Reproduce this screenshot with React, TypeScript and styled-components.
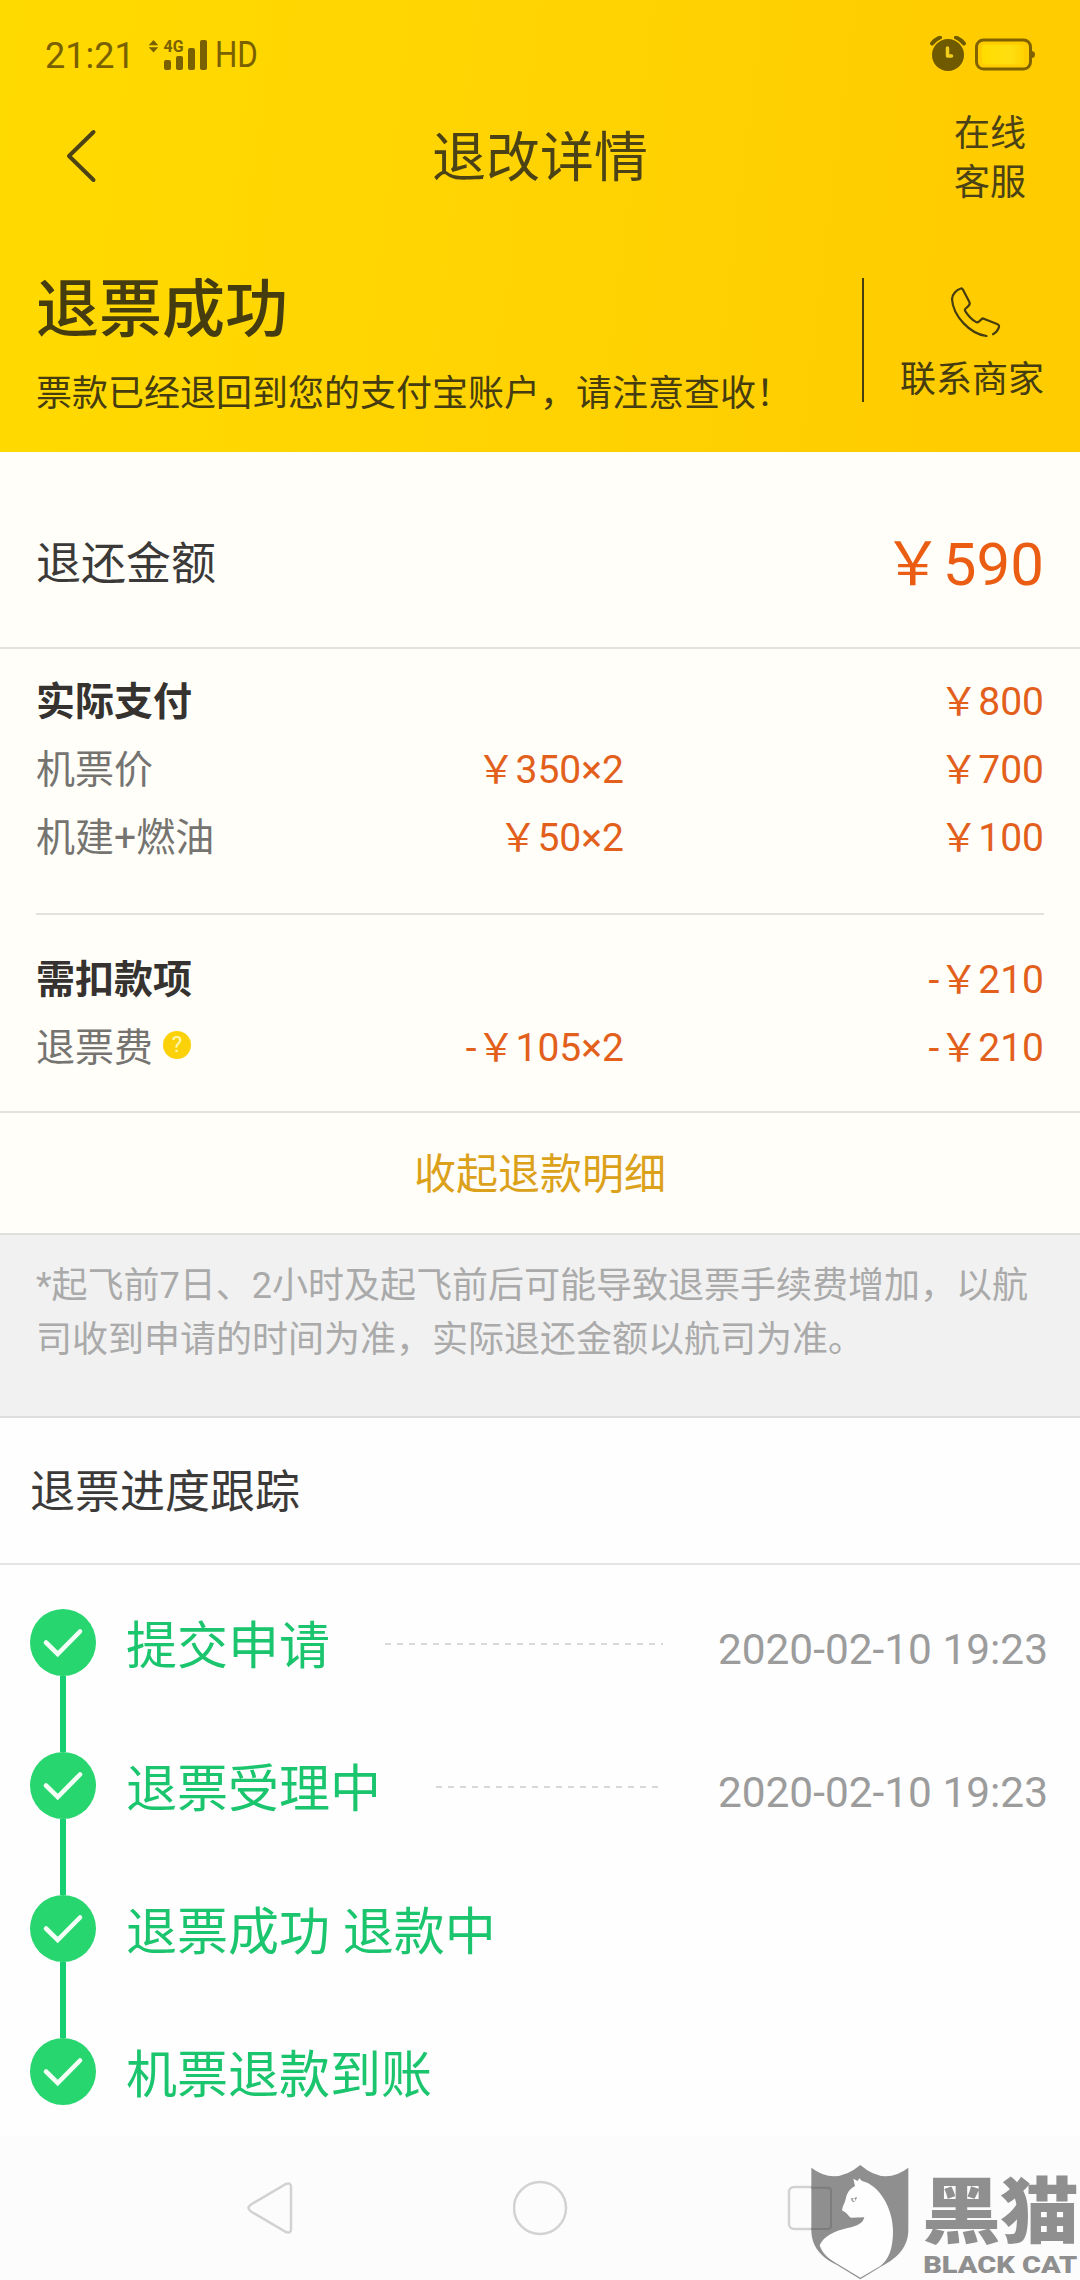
import React from "react";
import styled, { createGlobalStyle } from "styled-components";

const GlobalStyle = createGlobalStyle`
  *, *::before, *::after { box-sizing: border-box; }
  body { margin: 0; background: #fefefe; }
`;

const Page = styled.main`
  position: relative;
  display: flex;
  flex-direction: column;
  width: 1080px;
  height: 2280px;
  overflow: hidden;
  background: #fefefe;
  color: #3c3a38;
  font-family: Roboto, "Noto Sans CJK SC", sans-serif;
  line-height: 1.2;
`;

const Header = styled.header`
  height: 452px;
  background: linear-gradient(97deg, #ffda00 0%, #ffd302 50%, #ffcc00 88%);
`;

const StatusBar = styled.div`
  display: flex;
  align-items: center;
  justify-content: space-between;
  height: 110px;
  padding: 0 44px 0 45px;
  color: #796000;
`;

const StatusGroup = styled.div`
  display: flex;
  align-items: center;
  gap: 7px;
`;

const Clock = styled.span`
  width: 96px;
  padding-top: 1px;
  font-size: 36px;
  line-height: 44px;
`;

const HdLabel = styled.span`
  font-size: 36px;
  line-height: 42px;
  transform: scaleX(0.87);
  transform-origin: left;
`;

const TitleBar = styled.div`
  display: grid;
  grid-template-columns: 200px 1fr 200px;
  align-items: center;
  height: 97px;
  color: #4b4216;
`;

const BackButton = styled.button`
  display: flex;
  justify-content: flex-start;
  padding: 0 0 6px 64px;
  border: 0;
  background: none;
`;

const Title = styled.h1`
  margin: 0;
  font-size: 54px;
  font-weight: 400;
  line-height: 80px;
  text-align: center;
`;

const Service = styled.div`
  justify-self: end;
  width: 72px;
  margin-right: 54px;
  font-size: 36px;
  line-height: 49px;
`;

const Hero = styled.section`
  display: flex;
  align-items: flex-start;
  justify-content: space-between;
  padding-left: 36px;
  color: #453c10;
`;

const HeroText = styled.div`
  padding-top: 61px;
`;

const Headline = styled.h2`
  margin: 0 0 18px;
  font-size: 63px;
  font-weight: 500;
  line-height: 84px;
`;

const Sub = styled.p`
  margin: 0;
  font-size: 36px;
  line-height: 48px;
  white-space: nowrap;
`;

const Contact = styled.div`
  display: flex;
  flex-direction: column;
  align-items: center;
  width: 218px;
  height: 124px;
  margin-top: 71px;
  padding-top: 9px;
  border-left: 2px solid #453c10;
  font-size: 36px;
  line-height: 40px;
  gap: 21px;
`;

const AmountRow = styled.section`
  display: flex;
  align-items: center;
  justify-content: space-between;
  height: 197px;
  padding: 30px 36px 0;
  background: #fffef9;
  border-bottom: 2px solid #e3e2de;
  font-size: 45px;
`;

const Total = styled.span`
  color: #ea5d12;
  font-size: 60px;
`;

const Details = styled.section`
  padding: 0 36px;
  height: 464px;
  background: #fffef9;
  border-bottom: 2px solid #e3e2de;
`;

const Group = styled.div<{ $top: number; $bottom: number }>`
  padding: ${(p) => p.$top}px 0 ${(p) => p.$bottom}px;

  & + & {
    border-top: 2px solid #e3e2de;
  }
`;

const FeeRow = styled.div`
  display: grid;
  grid-template-columns: 294px 294px 420px;
  align-items: center;
  height: 68.3px;
  font-size: 39px;
`;

const FeeLabel = styled.span<{ $strong?: boolean }>`
  display: flex;
  align-items: center;
  gap: 10px;
  color: ${(p) => (p.$strong ? "#35322f" : "#757471")};
  font-weight: ${(p) => (p.$strong ? 700 : 400)};
`;

const Price = styled.span`
  color: #e2601c;
  text-align: right;
`;

const Help = styled.span`
  width: 28px;
  height: 28px;
  margin-top: -6px;
  border-radius: 50%;
  background: #fbd20a;
  color: #fff7b8;
  font-size: 22px;
  line-height: 28px;
  text-align: center;
`;

const Toggle = styled.button`
  height: 122px;
  padding: 4px 0 0;
  border: 0;
  border-bottom: 2px solid #dfdfdd;
  background: #fffef9;
  color: #dca11a;
  font: inherit;
  font-size: 42px;
`;

const Note = styled.p`
  height: 183px;
  margin: 0;
  padding: 24px 36px 0;
  border-bottom: 2px solid #dedede;
  background: #f1f1f1;
  color: #aaaaaa;
  font-size: 36px;
  line-height: 54px;
  white-space: nowrap;
`;

const SectionTitle = styled.h3`
  display: flex;
  align-items: center;
  height: 147px;
  margin: 0;
  padding: 5px 30px 0;
  border-bottom: 2px solid #e4e4e4;
  font-size: 45px;
  font-weight: 400;
`;

const Steps = styled.ol`
  height: 571px;
  margin: 0;
  padding: 6px 32px 0 30px;
  list-style: none;
`;

const Step = styled.li`
  display: flex;
  align-items: center;
  height: 143px;
`;

const Marker = styled.div`
  display: flex;
  flex-direction: column;
  align-items: center;
  align-self: stretch;
  width: 66px;
  margin-right: 30px;
`;

const Connector = styled.span<{ $visible: boolean }>`
  flex: 1;
  width: 6px;
  background: ${(p) => (p.$visible ? "#17cf70" : "transparent")};
`;

const Dot = styled.span`
  display: flex;
  width: 66px;
  height: 67px;
  border-radius: 50%;
  background: #27d66e;
`;

const StepName = styled.span`
  color: #1bc56e;
  font-size: 51px;
  line-height: 72px;
  padding-top: 8px;
`;

const Dashes = styled.span`
  flex: 1;
  height: 2px;
  margin: 2px 55px 0 55px;
  background: repeating-linear-gradient(90deg, #d8d8d8 0 6px, transparent 6px 12px);
`;

const Time = styled.time`
  padding-top: 14px;
  color: #9c9c9c;
  font-size: 42.4px;
  line-height: 50px;
`;

const NavBar = styled.nav`
  display: flex;
  align-items: center;
  justify-content: space-between;
  height: 144px;
  padding: 0 247px 0 246px;
  background: #fcfcfc;
`;

const Watermark = styled.div`
  position: absolute;
  right: 2px;
  bottom: 0;
  display: flex;
  height: 115px;
  width: 267px;
  color: #908f8f;
`;

const Brand = styled.div`
  display: flex;
  flex-direction: column;
  margin-left: 13px;
`;

const BrandName = styled.span`
  height: 83px;
  font-size: 79px;
  font-weight: 900;
  line-height: 96px;
  white-space: nowrap;
  letter-spacing: -1px;
  transform: scaleY(0.9);
`;

const BrandLatin = styled.span`
  padding-left: 1px;
  font-size: 24px;
  font-weight: 900;
  line-height: 34px;
  white-space: nowrap;
  transform: scaleX(1.205);
  transform-origin: left;
`;

const SignalIcon = () => (
  <svg width="60" height="34" viewBox="148 37 60 34" fill="currentColor">
    <path d="M153.500 39l4.800 5.200h-9.600zM153.500 51.500l4.800-5.200h-9.600z" />
    <rect x="164" y="59" width="7" height="10" rx="2" />
    <rect x="176" y="55" width="7" height="14" rx="2" />
    <rect x="188" y="47" width="7" height="22" rx="2" />
    <rect x="200" y="39" width="7" height="30" rx="2" />
    <text x="163.500" y="51" fontFamily="Roboto" fontSize="16.500" fontWeight="700" textLength="20" lengthAdjust="spacingAndGlyphs">4G</text>
  </svg>
);

const AlarmIcon = () => (
  <svg width="38" height="38" viewBox="929 36 38 38" fill="none">
    <circle cx="948" cy="55" r="16" fill="#705a00" />
    <path d="M932 43.500q3-4 8-6M964 43.500q-3-4-8-6" stroke="#705a00" strokeWidth="4" strokeLinecap="round" />
    <path d="M947.500 48v8h4" stroke="#f2ce1c" strokeWidth="3.500" strokeLinecap="round" strokeLinejoin="round" />
  </svg>
);

const BatteryIcon = () => (
  <svg width="62" height="34" viewBox="974 37.500 62 34" fill="none">
    <defs>
      <linearGradient id="charge">
        <stop offset="0" stopColor="#ffdc00" />
        <stop offset="0.700" stopColor="#ffde10" />
        <stop offset="1" stopColor="#ffd200" />
      </linearGradient>
    </defs>
    <rect x="982" y="44" width="42" height="20" rx="3" fill="url(#charge)" />
    <rect x="976.500" y="39.500" width="54" height="29" rx="7" stroke="#806300" strokeWidth="3" />
    <path d="M1031.500 50.500q3.500 0 3.500 3.500t-3.500 3.500z" fill="#806300" />
  </svg>
);

const BackIcon = () => (
  <svg width="34" height="56" viewBox="64 128 34 56" fill="none">
    <path d="M93.500 132L69 156l24.500 24" stroke="#4b4216" strokeWidth="4" strokeLinecap="round" strokeLinejoin="round" />
  </svg>
);

const PhoneIcon = () => (
  <svg width="52" height="52" viewBox="-4 0 52 52" fill="none" stroke="#453c10" strokeWidth="2.200" strokeLinecap="round" strokeLinejoin="round" overflow="visible">
    <path d="M36.500 49C20 47 3 29 2 12 2 7.500 6.500 2.500 11 1.500c1-.2 1.500.3 2 1.200l6.500 12.500c1 2-.5 3.500-3.800 6.300-1 .8-1 1.800-.3 2.800 3 4.700 6.500 8.300 10.400 10.600 1.200.7 2 .5 3-.3l3.500-3 .8-.2 14 5.500c1.800.7 2.400 2 1.600 4-1 2.700-3 4.800-5.700 6.300" />
  </svg>
);

const CheckIcon = () => (
  <svg width="66" height="66" viewBox="0 0 66 66" fill="none">
    <path d="M16 33.500L27.700 45 50 22.500" stroke="#f4fff6" strokeWidth="4.600" strokeLinecap="round" strokeLinejoin="miter" />
  </svg>
);

const NavBack = () => (
  <svg width="48" height="56" viewBox="0 0 48 56" fill="none">
    <path d="M45 7v42q0 5-5 3L5 31.500q-5-3.500 0-7L40 4q5-2 5 3z" stroke="#d2d2d2" strokeWidth="2.500" />
  </svg>
);

const NavHome = () => (
  <svg width="56" height="56" viewBox="0 0 56 56" fill="none">
    <circle cx="27" cy="28" r="26" stroke="#d2d2d2" strokeWidth="2.500" />
  </svg>
);

const NavRecent = () => (
  <svg width="46" height="46" viewBox="0 0 46 46" fill="none">
    <rect x="2" y="2" width="42" height="42" rx="5" stroke="#d2d2d2" strokeWidth="2.500" />
  </svg>
);

const CatShield = () => (
  <svg width="98" height="115" viewBox="92 105 294 345">
    <path d="M93 113Q165 168 240 105q72 63 144 8v187c0 50-32 84-79 108l-65 40-70-43c-47-22-77-55-77-105z" fill="#908f8f" />
    <path d="M93 173h50q9 0 9 9v106q0 9-9 9H93" fill="none" stroke="#7d7c7c" strokeWidth="6" />
    <path d="M219 146l13 7 5-8 8 8c52 12 93 82 93 150 0 52-12 85-38 105l-60 35-72-43c-26-15-44-33-50-54 12-28 46-44 84-52 30-6 46-14 50-32l-40 1c-8-3-5-9-27-22 1-12 9-22 12-38 4-18 14-27 27-35z" fill="#fefefe" />
    <path d="M212 205q10 0 18-4-1 10-10 16-8-4-8-12z" fill="#908f8f" />
    <circle cx="221" cy="209" r="4" fill="#fefefe" />
  </svg>
);

const STEPS = [
  { name: "提交申请", time: "2020-02-10 19:23" },
  { name: "退票受理中", time: "2020-02-10 19:23" },
  { name: "退票成功 退款中" },
  { name: "机票退款到账" },
];

export default function App() {
  return (
    <>
      <GlobalStyle />
      <Page>
        <Header>
          <StatusBar>
            <StatusGroup>
              <Clock>21:21</Clock>
              <SignalIcon />
              <HdLabel>HD</HdLabel>
            </StatusGroup>
            <StatusGroup>
              <AlarmIcon />
              <BatteryIcon />
            </StatusGroup>
          </StatusBar>
          <TitleBar>
            <BackButton aria-label="返回">
              <BackIcon />
            </BackButton>
            <Title>退改详情</Title>
            <Service>在线客服</Service>
          </TitleBar>
          <Hero>
            <HeroText>
              <Headline>退票成功</Headline>
              <Sub>票款已经退回到您的支付宝账户，请注意查收！</Sub>
            </HeroText>
            <Contact>
              <PhoneIcon />
              联系商家
            </Contact>
          </Hero>
        </Header>

        <AmountRow>
          <span>退还金额</span>
          <Total>￥590</Total>
        </AmountRow>

        <Details>
          <Group $top={19} $bottom={40}>
            <FeeRow>
              <FeeLabel $strong>实际支付</FeeLabel>
              <span />
              <Price>￥800</Price>
            </FeeRow>
            <FeeRow>
              <FeeLabel>机票价</FeeLabel>
              <Price>￥350×2</Price>
              <Price>￥700</Price>
            </FeeRow>
            <FeeRow>
              <FeeLabel>机建+燃油</FeeLabel>
              <Price>￥50×2</Price>
              <Price>￥100</Price>
            </FeeRow>
          </Group>
          <Group $top={31} $bottom={0}>
            <FeeRow>
              <FeeLabel $strong>需扣款项</FeeLabel>
              <span />
              <Price>-￥210</Price>
            </FeeRow>
            <FeeRow>
              <FeeLabel>
                退票费<Help>?</Help>
              </FeeLabel>
              <Price>-￥105×2</Price>
              <Price>-￥210</Price>
            </FeeRow>
          </Group>
        </Details>

        <Toggle>收起退款明细</Toggle>

        <Note>
          *起飞前7日、2小时及起飞前后可能导致退票手续费增加，以航
          <br />
          司收到申请的时间为准，实际退还金额以航司为准。
        </Note>

        <SectionTitle>退票进度跟踪</SectionTitle>

        <Steps>
          {STEPS.map((step, i) => (
            <Step key={step.name}>
              <Marker>
                <Connector $visible={i > 0} />
                <Dot>
                  <CheckIcon />
                </Dot>
                <Connector $visible={i < STEPS.length - 1} />
              </Marker>
              <StepName>{step.name}</StepName>
              {step.time && (
                <>
                  <Dashes />
                  <Time>{step.time}</Time>
                </>
              )}
            </Step>
          ))}
        </Steps>

        <NavBar>
          <NavBack />
          <NavHome />
          <NavRecent />
        </NavBar>

        <Watermark>
          <CatShield />
          <Brand>
            <BrandName>黑猫</BrandName>
            <BrandLatin>BLACK CAT</BrandLatin>
          </Brand>
        </Watermark>
      </Page>
    </>
  );
}
